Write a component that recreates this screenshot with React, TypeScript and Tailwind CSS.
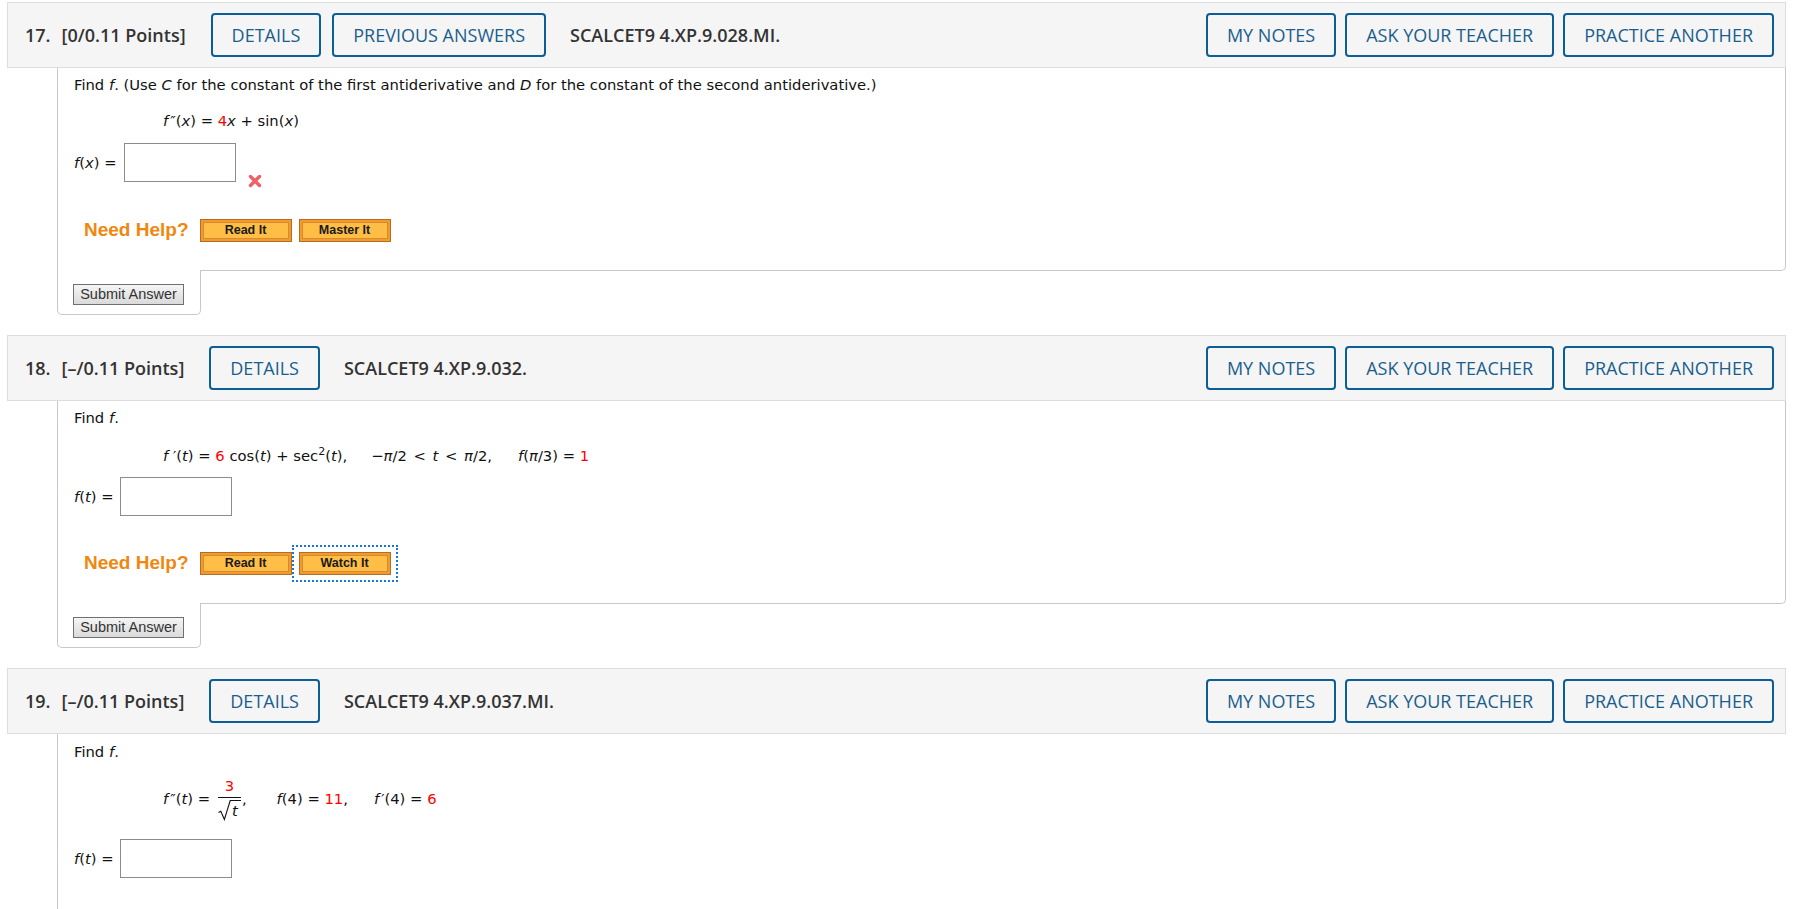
import React from "react";

const R = ({ children }: { children: React.ReactNode }) => (
  <span className="text-[#ff0000]">{children}</span>
);
const I = ({ children }: { children: React.ReactNode }) => (
  <span className="italic">{children}</span>
);
const DP = () => <span className="ml-[2px]">″</span>;
const SP = () => <span className="ml-[2px]">′</span>;

function HeaderBtn({ children }: { children: React.ReactNode }) {
  return (
    <span className="inline-flex h-[44px] items-center rounded-[4px] border-2 border-[#0b5e96] px-[19px] text-[18px] font-medium text-[#1b5e8e]">
      {children}
    </span>
  );
}

function Header({
  num,
  points,
  prev,
  code,
}: {
  num: string;
  points: string;
  prev?: boolean;
  code: string;
}) {
  return (
    <div className="flex h-[66px] items-center border border-[#dddddd] bg-[#f5f5f5] pl-[17px] pr-[11px] font-['Open_Sans',sans-serif]">
      <span className="text-[18px] font-semibold text-[#333333]">{num}.</span>
      <span className="ml-[11px] mr-[25px] text-[18px] font-semibold text-[#333333]">
        [{points} Points]
      </span>
      <div className="flex gap-[11px]">
        <HeaderBtn>DETAILS</HeaderBtn>
        {prev && <HeaderBtn>PREVIOUS ANSWERS</HeaderBtn>}
      </div>
      <span className="ml-[24px] text-[18px] font-semibold text-[#333333]">{code}</span>
      <div className="ml-auto flex gap-[9px]">
        <HeaderBtn>MY NOTES</HeaderBtn>
        <HeaderBtn>ASK YOUR TEACHER</HeaderBtn>
        <HeaderBtn>PRACTICE ANOTHER</HeaderBtn>
      </div>
    </div>
  );
}

function HelpBtn({ children, focused }: { children: React.ReactNode; focused?: boolean }) {
  return (
    <span
      className={
        focused
          ? "inline-flex h-[23px] w-[92px] border border-[#b36d24] bg-[#f39a2c] p-[2px] outline-2 outline-offset-[5px] outline-dotted outline-[#1777d1]"
          : "inline-flex h-[23px] w-[92px] border border-[#b36d24] bg-[#f39a2c] p-[2px]"
      }
    >
      <span className="flex flex-1 items-center justify-center border border-[#d98a2e] bg-[#ffbe46] font-['Liberation_Sans',Arial,sans-serif] text-[12.5px] font-bold leading-none text-[#1a1a1a]">
        {children}
      </span>
    </span>
  );
}

function HelpRow({ second, focused }: { second: string; focused?: boolean }) {
  return (
    <div className="flex h-[24px] items-center pl-[10px]">
      <span className="font-['Liberation_Sans',Arial,sans-serif] text-[19px] font-bold text-[#f0870f]">
        Need Help?
      </span>
      <span className="ml-[11px] flex gap-[7px]">
        <HelpBtn>Read It</HelpBtn>
        <HelpBtn focused={focused}>{second}</HelpBtn>
      </span>
    </div>
  );
}

function SubmitTab() {
  return (
    <div className="relative z-10 -mt-px w-[144px] rounded-b-[5px] border border-t-0 border-[#c8c8c8] bg-white pb-[9px] pl-[15px] pt-[14px]">
      <button className="flex h-[21px] w-[111px] items-center justify-center border border-[#707070] bg-linear-to-b from-[#f5f5f5] to-[#dadada] font-['Liberation_Sans',Arial,sans-serif] text-[14.5px] leading-none text-[#333333]">
        Submit Answer
      </button>
    </div>
  );
}

function Input() {
  return <span className="inline-block h-[39px] w-[112px] border border-[#8c8c8c] bg-white" />;
}

function RedX() {
  return (
    <svg width="14" height="14" viewBox="0 0 14 14" className="ml-[12px] -mb-[6px] self-end">
      <path d="M2.5 2.5 L11.5 11.5 M11.5 2.5 L2.5 11.5" stroke="#ef5f68" strokeWidth="3.4" strokeLinecap="round" />
    </svg>
  );
}

export default function App() {
  const body = "font-['DejaVu_Sans',Verdana,sans-serif] text-[14.75px] text-[#111111]";
  return (
    <div className="min-h-screen w-full bg-white pl-[7px] pr-[9px] pt-[2px]">
      {/* Question 17 */}
      <Header num="17" points="0/0.11" prev code="SCALCET9 4.XP.9.028.MI." />
      <div className="ml-[50px]">
        <div className={`rounded-br-[5px] border border-t-0 border-[#c8c8c8] pb-[28px] pl-[16px] pt-[7px] ${body}`}>
          <div className="leading-[20px]">
            Find <I>f</I>. (Use <I>C</I> for the constant of the first antiderivative and <I>D</I> for the constant of the second antiderivative.)
          </div>
          <div className="mt-[16px] pl-[89px] leading-[20px]">
            <I>f</I>
            <DP />(<I>x</I>) = <R>4</R><I>x</I> + sin(<I>x</I>)
          </div>
          <div className="mt-[12px] flex items-center">
            <span className="leading-[20px]">
              <I>f</I>(<I>x</I>) =
            </span>
            <span className="ml-[7px] flex">
              <Input />
            </span>
            <RedX />
          </div>
          <div className="mt-[36px]">
            <HelpRow second="Master It" />
          </div>
        </div>
        <SubmitTab />
      </div>

      {/* Question 18 */}
      <div className="mt-[20px]">
        <Header num="18" points="–/0.11" code="SCALCET9 4.XP.9.032." />
      </div>
      <div className="ml-[50px]">
        <div className={`rounded-br-[5px] border border-t-0 border-[#c8c8c8] pb-[28px] pl-[16px] pt-[7px] ${body}`}>
          <div className="leading-[20px]">
            Find <I>f</I>.
          </div>
          <div className="mt-[18px] pl-[89px] leading-[20px]">
            <I>f</I> ′(<I>t</I>) = <R>6</R> cos(<I>t</I>) + sec<sup>2</sup>(<I>t</I>),
            <span className="inline-block w-[24px]" />
            −<I>π</I>/2 <span className="mx-[2px]">&lt;</span> <I>t</I> <span className="mx-[2px]">&lt;</span> <I>π</I>/2,
            <span className="inline-block w-[26px]" />
            <I>f</I>(<I>π</I>/3) = <R>1</R>
          </div>
          <div className="mt-[11px] flex items-center">
            <span className="leading-[20px]">
              <I>f</I>(<I>t</I>) =
            </span>
            <span className="ml-[6px] flex">
              <Input />
            </span>
          </div>
          <div className="mt-[35px]">
            <HelpRow second="Watch It" focused />
          </div>
        </div>
        <SubmitTab />
      </div>

      {/* Question 19 */}
      <div className="mt-[20px]">
        <Header num="19" points="–/0.11" code="SCALCET9 4.XP.9.037.MI." />
      </div>
      <div className="ml-[50px]">
        <div className={`h-[200px] border-l border-[#c8c8c8] pl-[16px] pt-[8px] ${body}`}>
          <div className="leading-[20px]">
            Find <I>f</I>.
          </div>
          <div className="mt-[14px] flex items-center pl-[89px] leading-[20px]">
            <span>
              <I>f</I>
              <DP />(<I>t</I>) =
            </span>
            <span className="ml-[8px] mr-[1px] inline-flex flex-col items-center">
              <span className="px-[3px] leading-[20px] text-[#ff0000]">3</span>
              <span className="mt-[1px] block h-px w-full bg-[#111111]" />
              <span className="mt-[2px] flex items-start">
                <svg width="13" height="21" viewBox="0 0 13 21" className="block">
                  <path d="M0.5 12.5 L2.8 11.2 L6.4 19.5 L12.2 0.6 L13 0.6" fill="none" stroke="#111111" strokeWidth="1.1" />
                </svg>
                <span className="border-t border-[#111111] pl-[1px] pr-[3px] leading-[19px]">
                  <I>t</I>
                </span>
              </span>
            </span>
            <span>
              ,<span className="inline-block w-[30px]" />
              <I>f</I>(4) = <R>11</R>,<span className="inline-block w-[26px]" />
              <I>f</I>
              <SP />(4) = <R>6</R>
            </span>
          </div>
          <div className="mt-[18px] flex items-center">
            <span className="leading-[20px]">
              <I>f</I>(<I>t</I>) =
            </span>
            <span className="ml-[6px] flex">
              <Input />
            </span>
          </div>
        </div>
      </div>
    </div>
  );
}
